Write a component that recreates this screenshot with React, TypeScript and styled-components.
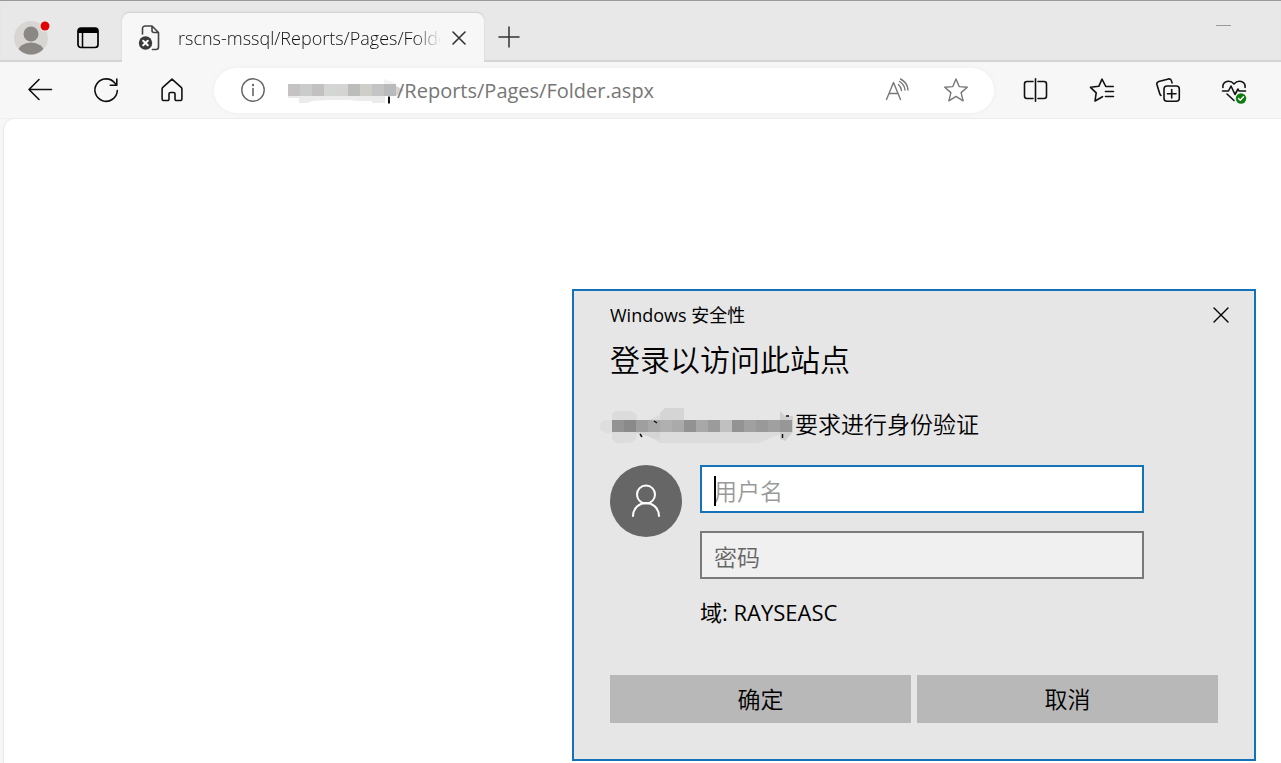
import React from "react";
import styled, { createGlobalStyle } from "styled-components";

const GlobalStyle = createGlobalStyle`
  *, *::before, *::after { box-sizing: border-box; }
  html, body { margin: 0; background: #fff; }
  body, button, input { font-family: "Open Sans", "Noto Sans CJK SC", sans-serif; font-weight: 350; }
  button { border: 0; padding: 0; background: none; color: inherit; cursor: pointer; }
  svg { display: block; flex: none; overflow: visible; }
  h1, h2, p { margin: 0; font-weight: 350; }
`;

const Browser = styled.div`
  min-height: 100vh;
  display: flex;
  flex-direction: column;
  background: #f7f7f7;
`;

const TabStrip = styled.div`
  display: flex;
  align-items: flex-end;
  height: 62px;
  background: #e8e8e8;
  border-top: 1px solid #999;
  box-shadow: inset 0 -2px 1px #d4d4d4;
`;

const StripTools = styled.div`
  display: flex;
  align-items: center;
  gap: 29px;
  width: 122px;
  height: 49px;
  padding-left: 14px;
`;

const Tab = styled.div`
  display: flex;
  align-items: center;
  width: 362px;
  height: 49px;
  padding: 0 17px 0 16px;
  background: #f7f7f7;
  border-radius: 8px 8px 0 0;
  box-shadow: 0 -1px 2px #cfcfcf;
  clip-path: inset(-4px -4px 0 -4px);
`;

const TabTitle = styled.span`
  flex: 1;
  min-width: 0;
  margin: 0 10px 0 18px;
  white-space: nowrap;
  font-size: 18px;
  font-weight: 300;
  line-height: 26px;
  color: #111;
  mask-image: linear-gradient(to right, #000 90%, transparent);
`;

const IconButton = styled.button<{ $size?: number }>`
  display: grid;
  place-items: center;
  flex: none;
  width: ${(p) => p.$size ?? 34}px;
  height: ${(p) => p.$size ?? 34}px;
`;

const NewTab = styled(IconButton)`
  margin: 0 auto 8px 8px;
`;

const Minimize = styled(IconButton)`
  margin: 0 41px 20px 0;
`;

const Toolbar = styled.div`
  display: flex;
  align-items: center;
  height: 57px;
  padding: 0 30px 0 23px;
  border-bottom: 1px solid #f0f0f0;
`;

const ButtonGroup = styled.div`
  display: flex;
  gap: 32px;
`;

const AddressBar = styled.div`
  display: flex;
  align-items: center;
  flex: 1;
  height: 45px;
  margin: 0 25px;
  padding: 0 21px 0 22px;
  background: #fff;
  border-radius: 23px;
  box-shadow: 0 0 4px #ececec;
`;

const HiddenHost = styled.svg`
  margin-left: 18px;
`;

const Url = styled.input`
  flex: 1;
  min-width: 0;
  height: 30px;
  padding: 0;
  border: 0;
  outline: 0;
  background: transparent;
  color: #767676;
  font-size: 20px;
  font-weight: 400;
`;

const AddressTools = styled.div`
  display: flex;
  gap: 25px;
`;

const Page = styled.main`
  flex: 1;
  display: flex;
  flex-direction: column;
  align-items: flex-end;
  margin-left: 3px;
  padding: 170px 25px 2px;
  background: #fff;
  border-left: 1px solid #e8e8e8;
  border-top: 1px solid #ececec;
  border-top-left-radius: 12px;
  margin-top: -1px;
`;

const Dialog = styled.section`
  width: 684px;
  max-width: 100%;
  padding: 7px 36px 36px;
  background: #e6e6e6;
  border: 2px solid #1473b8;
  color: #000;
`;

const DialogBar = styled.header`
  display: flex;
  align-items: center;
  justify-content: space-between;
  height: 34px;
  margin-right: -20px;
`;

const Caption = styled.h2`
  font-size: 18px;
  font-weight: 400;
  line-height: 34px;
`;

const Heading = styled.h1`
  font-size: 30px;
  line-height: 56px;
`;

const Message = styled.p`
  display: flex;
  align-items: center;
  height: 48px;
  margin-top: 12px;
  font-size: 23px;
  line-height: 48px;
`;

const Credentials = styled.form``;

const Account = styled.div`
  display: flex;
  gap: 18px;
  margin-top: 17px;
`;

const Avatar = styled.div`
  display: grid;
  place-items: center;
  flex: none;
  width: 72px;
  height: 72px;
  border-radius: 50%;
  background: #666;
`;

const Fields = styled.div`
  display: flex;
  flex-direction: column;
  gap: 18px;
  width: 444px;
`;

const Field = styled.label<{ $active?: boolean }>`
  position: relative;
  display: flex;
  height: 48px;
  border: 2px solid ${(p) => (p.$active ? "#1473b8" : "#7a7a7a")};
  background: ${(p) => (p.$active ? "#fff" : "#f0f0f0")};
`;

const FieldInput = styled.input<{ $tone: string }>`
  flex: 1;
  min-width: 0;
  padding: 4px 12px 0;
  border: 0;
  outline: 0;
  background: transparent;
  font-size: 23px;
  &::placeholder { color: ${(p) => p.$tone}; opacity: 1; }
`;

const Caret = styled.span`
  position: absolute;
  left: 12px;
  top: 9px;
  width: 2px;
  height: 30px;
  background: #000;
`;

const Domain = styled.p`
  font-size: 22px;
  font-weight: 400;
  line-height: 30px;
`;

const Actions = styled.div`
  display: grid;
  grid-template-columns: 1fr 1fr;
  gap: 6px;
  margin-top: 48px;
`;

const ActionButton = styled.button`
  height: 48px;
  padding-bottom: 2px;
  background: #b8b8b8;
  color: #000;
  font-size: 23px;
`;

const line = (color = "#111", width = 1.6) => ({
  fill: "none",
  stroke: color,
  strokeWidth: width,
  strokeLinecap: "round" as const,
  strokeLinejoin: "round" as const,
});

const STAR = "M12 1 L15.2 8.6 L23.3 9.2 L17.1 14.6 L19.1 22.8 L12 18.4 L4.9 22.8 L6.9 14.6 L.7 9.2 L8.8 8.6 Z";

const ProfileIcon = () => (
  <svg width="34" height="34" viewBox="0 0 34 34">
    <defs><clipPath id="face"><circle cx="17" cy="17" r="16.5" /></clipPath></defs>
    <circle cx="17" cy="17" r="17" fill="#d8d6d2" />
    <g clipPath="url(#face)" fill="#8b8785">
      <circle cx="17" cy="13" r="7.5" />
      <ellipse cx="17" cy="31" rx="13" ry="9.5" />
    </g>
    <circle cx="31" cy="5" r="5.5" fill="#f2eeee" />
    <circle cx="31" cy="5" r="4.5" fill="#df0505" />
  </svg>
);

const WorkspaceIcon = () => (
  <svg width="22" height="22" viewBox="0 0 22 22">
    <rect x="1" y="1" width="20" height="19.5" rx="3" {...line("#000", 1.7)} />
    <path d="M1 6V4a3 3 0 0 1 3-3h14a3 3 0 0 1 3 3v2z" fill="#000" />
    <path d="M5.5 6v14" {...line("#000", 1.5)} />
  </svg>
);

const BrokenPageIcon = () => (
  <svg width="22" height="26" viewBox="0 0 22 26">
    <path d="M4.5 9V3.5a2.5 2.5 0 0 1 2.5-2.5h7l6.5 6.5v14.5a2.5 2.5 0 0 1-2.5 2.5h-3.5M14 1v4.5a2 2 0 0 0 2 2h4.5" {...line("#444")} />
    <circle cx="7.5" cy="18" r="6.7" fill="#3b3b3b" />
    <path d="M5.2 15.700l4.600 4.600m0-4.600l-4.600 4.600" {...line("#fff", 2)} />
  </svg>
);

const hostBlocks = ["#c4c2c3", "#cacccb", "#c2c0c1", "#d4d6d3", "#d4d4d2", "#bbbdbd", "#d0cec9", "#c4c4c4", "#b8babc"];
const siteBlocks = ["#939393", "#8a8a8a", "#9f9f9f", "#a8a8a8", "#b0b0b0", "#aaaaaa", "#929292", "#a8a8a8", "#9b9b9b", "#c0c0c0", "#939393", "#a0a0a0", "#999999", "#a0a0a0", "#979797"];

export default function App() {
  return (
    <>
      <GlobalStyle />
      <Browser>
        <TabStrip>
          <StripTools>
            <IconButton aria-label="Profile"><ProfileIcon /></IconButton>
            <IconButton $size={22} aria-label="Tab actions"><WorkspaceIcon /></IconButton>
          </StripTools>
          <Tab>
            <BrokenPageIcon />
            <TabTitle>rscns-mssql/Reports/Pages/Folde</TabTitle>
            <IconButton $size={16} aria-label="Close tab">
              <svg width="12" height="12" viewBox="0 0 12 12"><path d="M0 0l12 12M12 0L0 12" {...line("#333", 1.6)} /></svg>
            </IconButton>
          </Tab>
          <NewTab aria-label="New tab">
            <svg width="20" height="20" viewBox="0 0 20 20"><path d="M10 0v20M0 10h20" {...line("#333", 1.5)} /></svg>
          </NewTab>
          <Minimize aria-label="Minimize">
            <svg width="15" height="1" viewBox="0 0 15 1"><path d="M0 .5h15" stroke="#999" /></svg>
          </Minimize>
        </TabStrip>

        <Toolbar>
          <ButtonGroup>
            <IconButton aria-label="Back">
              <svg width="24" height="22" viewBox="0 0 24 22"><path d="M23.500 10.500H1M11 .5L1 10.500l10 10" {...line()} /></svg>
            </IconButton>
            <IconButton aria-label="Refresh">
              <svg width="24" height="24" viewBox="0 0 24 24"><path d="M23.300 12.500A11.200 11.200 0 1 1 20.800 5l2 2.200M22.800 1v6.300h-6.500" {...line()} /></svg>
            </IconButton>
            <IconButton aria-label="Home">
              <svg width="22" height="24" viewBox="0 0 22 24"><path d="M11 1.200L1.800 9.400a2 2 0 0 0-.7 1.500V21a1.500 1.500 0 0 0 1.500 1.500h4.200A1.200 1.200 0 0 0 8 21.300V16a1.500 1.500 0 0 1 1.500-1.500h3A1.500 1.500 0 0 1 14 16v5.300a1.200 1.200 0 0 0 1.200 1.200h4.200a1.500 1.500 0 0 0 1.500-1.500V10.900a2 2 0 0 0-.7-1.500Z" {...line()} /></svg>
            </IconButton>
          </ButtonGroup>
          <AddressBar>
            <IconButton aria-label="Site information">
              <svg width="24" height="24" viewBox="0 0 24 24">
                <circle cx="12" cy="12" r="11.2" {...line("#666", 1.4)} />
                <path d="M12 10.500v7" {...line("#666", 1.6)} /><circle cx="12" cy="7" r="1.2" fill="#666" />
              </svg>
            </IconButton>
            <HiddenHost width="109" height="22" viewBox="0 0 109 22" aria-hidden="true">
              <path d="M0 16h97v8H84v-2H72l-12-1H40l-16 1-4 2h-9v-5H0z" fill="#ebebeb" />
              <path d="M96 0l12 4v2H96z" fill="#f4f4f4" />
              {hostBlocks.map((c, i) => <rect key={i} x={i * 12} y="5" width="12" height="12" fill={c} />)}
              <path d="M108 7l8 4-8 6z" fill="#d3d3d3" />
              <path d="M101 17.500v7" stroke="#111" strokeWidth="2" />
            </HiddenHost>
            <Url aria-label="Address" defaultValue="/Reports/Pages/Folder.aspx" spellCheck={false} />
            <AddressTools>
              <IconButton aria-label="Read aloud">
                <svg width="24" height="22" viewBox="0 0 24 22"><path d="M1.500 20.500L8.500 3.500l7 17M3.900 14.500h9.200M13.500 5.500a9 9 0 0 1 3 6M14.500 2.500q5 3 5.500 8.500M15.500 0q7 3.500 7.500 11" {...line("#777", 1.4)} /></svg>
              </IconButton>
              <IconButton aria-label="Add to favorites">
                <svg width="24" height="24" viewBox="0 0 24 24"><path d={STAR} {...line("#777", 1.4)} /></svg>
              </IconButton>
            </AddressTools>
          </AddressBar>
          <ButtonGroup>
            <IconButton aria-label="Split screen">
              <svg width="24" height="24" viewBox="0 0 24 24"><path d="M11.500 .8v22.500M9 3.500H3A2.500 2.500 0 0 0 .5 6v12A2.500 2.500 0 0 0 3 20.500h6M14 3.500h6A2.500 2.500 0 0 1 22.500 6v12a2.500 2.500 0 0 1-2.500 2.500h-6" {...line()} /></svg>
            </IconButton>
            <IconButton aria-label="Favorites">
              <svg width="24" height="24" viewBox="0 0 24 24"><path d="M23.300 8.500h-7.500L12 1.200 8.800 8.300.5 9.300l5.700 5.500-1.200 8.200 7.500-4.300M15.500 13.500h8M15.500 18.500h8" {...line()} /></svg>
            </IconButton>
            <IconButton aria-label="Collections">
              <svg width="24" height="24" viewBox="0 0 24 24"><rect x="8" y="8" width="15.3" height="15.3" rx="3" {...line()} /><path d="M15.700 11.500v8.500M11.400 15.700h8.600M5 17.500q-1-.5-1.500-2.500L.9 6.500Q.5 4.300 2.800 3.500L12.500.9q2.500-.3 3 2l.5 2" {...line()} /></svg>
            </IconButton>
            <IconButton aria-label="Browser essentials">
              <svg width="24" height="24" viewBox="0 0 24 24">
                <path d="M.9 9.500C.3 3 8 1.300 12 6c4-4.700 11.700-3 11.100 3.500M.5 13h6l2.500-5 4 8.500 3-5.500 1 2h6.500M5 16l7 6.500" {...line()} />
                <circle cx="19" cy="20.5" r="6" fill="#f7f7f7" />
                <circle cx="19" cy="20.5" r="5.2" fill="#107c10" />
                <path d="M16.500 20.600l1.800 1.700 3.200-3.500" {...line("#fff", 1.4)} />
              </svg>
            </IconButton>
          </ButtonGroup>
        </Toolbar>

        <Page>
          <Dialog role="dialog" aria-labelledby="signin-title">
            <DialogBar>
              <Caption>Windows 安全性</Caption>
              <IconButton aria-label="关闭">
                <svg width="14" height="14" viewBox="0 0 14 14"><path d="M0 0l14 14M14 0L0 14" {...line("#000", 1.4)} /></svg>
              </IconButton>
            </DialogBar>
            <Heading id="signin-title">登录以访问此站点</Heading>
            <Message>
              <svg width="185" height="40" viewBox="0 0 185 40" aria-hidden="true">
                <path d="M2 16h-8l-4 3v6l6 4h6z" fill="#dedede" />
                <path d="M2 10l4-3h16l5 4v5H2zM38 16l12-5v5zM2 28h25l-1 7-6 4H6l-4-4zM38 28h138l-28 11H50l-12-7z" fill="#dcdcdc" />
                <path d="M50 16v-7l5-5h19v12zM26 28h24v8l-24-7z" fill="#d5d5d5" />
                {siteBlocks.map((c, i) => <rect key={i} x={2 + i * 12} y="16" width="12" height="12" fill={c} />)}
                <path d="M170 7l5 5h8v16l-8 9-5-2v-7h12V16h-12z" fill="#cfcfcf" />
                <path d="M44 17l3 2M30 30l2 3M176 12h3M172.500 30v4" stroke="#111" strokeWidth="1.5" />
              </svg>
              <span>要求进行身份验证</span>
            </Message>
            <Credentials onSubmit={(e: React.FormEvent) => e.preventDefault()}>
              <Account>
                <Avatar>
                  <svg width="28" height="32" viewBox="0 0 28 32"><circle cx="14" cy="9.5" r="9" {...line("#fff", 2)} /><path d="M1 31a13 13 0 0 1 26 0" {...line("#fff", 2)} /></svg>
                </Avatar>
                <Fields>
                  <Field $active>
                    <FieldInput $tone="#999" type="text" aria-label="用户名" placeholder="用户名" />
                    <Caret />
                  </Field>
                  <Field>
                    <FieldInput $tone="#666" type="password" aria-label="密码" placeholder="密码" />
                  </Field>
                  <Domain>域: RAYSEASC</Domain>
                </Fields>
              </Account>
              <Actions>
                <ActionButton type="submit">确定</ActionButton>
                <ActionButton type="button">取消</ActionButton>
              </Actions>
            </Credentials>
          </Dialog>
        </Page>
      </Browser>
    </>
  );
}
